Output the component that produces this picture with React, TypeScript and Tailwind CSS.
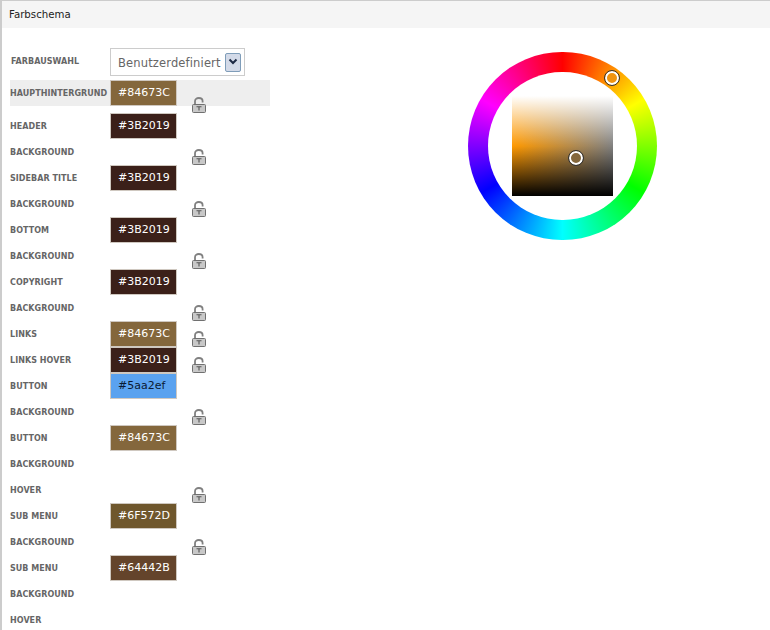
const rows = [
  { label: ["Header", "Background"], value: "#3B2019", h: "h-[52px]" },
  { label: ["Sidebar Title", "Background"], value: "#3B2019", h: "h-[52px]" },
  { label: ["Bottom", "Background"], value: "#3B2019", h: "h-[52px]" },
  { label: ["Copyright", "Background"], value: "#3B2019", h: "h-[52px]" },
  { label: ["Links"], value: "#84673C", h: "h-[26px]" },
  { label: ["Links Hover"], value: "#3B2019", h: "h-[26px]" },
  { label: ["Button", "Background"], value: "#5aa2ef", h: "h-[52px]", dark: true },
  { label: ["Button", "Background", "Hover"], value: "#84673C", h: "h-[78px]" },
  { label: ["Sub Menu", "Background"], value: "#6F572D", h: "h-[52px]" },
  { label: ["Sub Menu", "Background", "Hover"], value: "#64442B", h: "h-[78px]", noLock: true },
];

function Lock() {
  return (
    <svg width="14" height="16" viewBox="0 0 14 16" className="block shrink-0">
      <path d="M3 8V4.2C3 2.2 4.6 1 6.8 1S10.6 2.2 10.6 4.2V5.5" fill="none" stroke="#808080" strokeWidth="1.8" />
      <rect x="0.5" y="7.5" width="13" height="8" rx="1" fill="#c8c8c8" stroke="#707070" />
      <path d="M4.5 9.8h5M7 9.8v3.7" stroke="#555" strokeWidth="1.1" fill="none" />
    </svg>
  );
}

function Label({ lines }: { lines: string[] }) {
  return (
    <div className="w-[100px] shrink-0 pt-px text-[8px] font-bold uppercase leading-[26px] tracking-[0.05px] whitespace-nowrap text-[#666] font-['DejaVu_Sans',sans-serif]">
      {lines.map((l) => (
        <div key={l}>{l}</div>
      ))}
    </div>
  );
}

function Swatch({ value, dark, bg }: { value: string; dark?: boolean; bg: string }) {
  return (
    <div
      className={`box-border flex h-[26px] w-[67px] shrink-0 items-center border border-[#cfc8c0] pl-[7px] text-[11px] font-['DejaVu_Sans',sans-serif] ${
        dark ? "text-[#0a1a33]" : "text-white"
      }`}
      style={{ backgroundColor: bg }}
    >
      {value}
    </div>
  );
}

export default function App() {
  return (
    <div className="box-border flex h-[630px] w-[770px] flex-col overflow-hidden border-l-2 border-t border-[#cccccc] bg-white font-['DejaVu_Sans',sans-serif]">
      <div className="flex h-[27px] shrink-0 items-center bg-[#f5f5f5] pl-[7px] pt-px text-[10.2px] text-[#222]">Farbschema</div>
      <div className="flex pl-2 pt-5">
        <div className="w-[260px] shrink-0">
          <div className="flex items-center">
            <div className="w-[100px] pl-px text-[8px] font-bold uppercase tracking-[0.05px] text-[#666]">Farbauswahl</div>
            <div className="box-border flex h-[28px] w-[135px] items-center justify-between border border-[#cccccc] pl-[7px] pr-[3px] text-[11.5px] tracking-[0.15px] text-[#666]">
              <span className="whitespace-nowrap pt-[3px]">Benutzerdefiniert</span>
              <span className="box-border flex h-[19px] w-[16px] items-center justify-center rounded-[2px] border border-[#7f9db9] bg-[#d3dae8]">
                <svg width="10" height="8" viewBox="0 0 10 8">
                  <path d="M1.5 1.5 5 5l3.5-3.5" fill="none" stroke="#1d2a44" strokeWidth="2" />
                </svg>
              </span>
            </div>
          </div>

          <div className="mb-[7px] mt-[4px] flex h-[26px] items-start bg-[#eeeeee]">
            <Label lines={["Haupthintergrund"]} />
            <Swatch value="#84673C" bg="#84673C" />
            <div className="ml-[15px] mt-[17px]">
              <Lock />
            </div>
          </div>

          {rows.map((r, i) => (
            <div key={i} className={`flex items-start ${r.h}`}>
              <Label lines={r.label} />
              <Swatch value={r.value} bg={r.value} dark={r.dark} />
              {!r.noLock && (
                <div className="ml-[15px] flex h-full items-end">
                  <Lock />
                </div>
              )}
            </div>
          ))}
        </div>

        <div className="relative ml-[198px] mt-[4px] flex h-[188px] w-[189px] shrink-0 items-center justify-center rounded-full bg-[conic-gradient(#ff0000,#ffff00,#00ff00,#00ffff,#0000ff,#ff00ff,#ff0000)]">
          <div className="flex h-[148px] w-[149px] items-center justify-center rounded-full bg-white">
            <div className="h-[100px] w-[101px] bg-[linear-gradient(to_bottom,#ffffff,rgba(255,255,255,0)_50%,rgba(0,0,0,0)_50%,#000000),linear-gradient(to_right,#ff9900,#808080)]" />
          </div>
          <div className="absolute left-[137px] top-[19px] box-border h-[14px] w-[14px] rounded-full border-2 border-white bg-[#f09410] outline outline-1 outline-[#333]" />
          <div className="absolute left-[101px] top-[99px] box-border h-[14px] w-[14px] rounded-full border-2 border-white bg-[#84673c] outline outline-1 outline-[#333]" />
        </div>
      </div>
    </div>
  );
}
